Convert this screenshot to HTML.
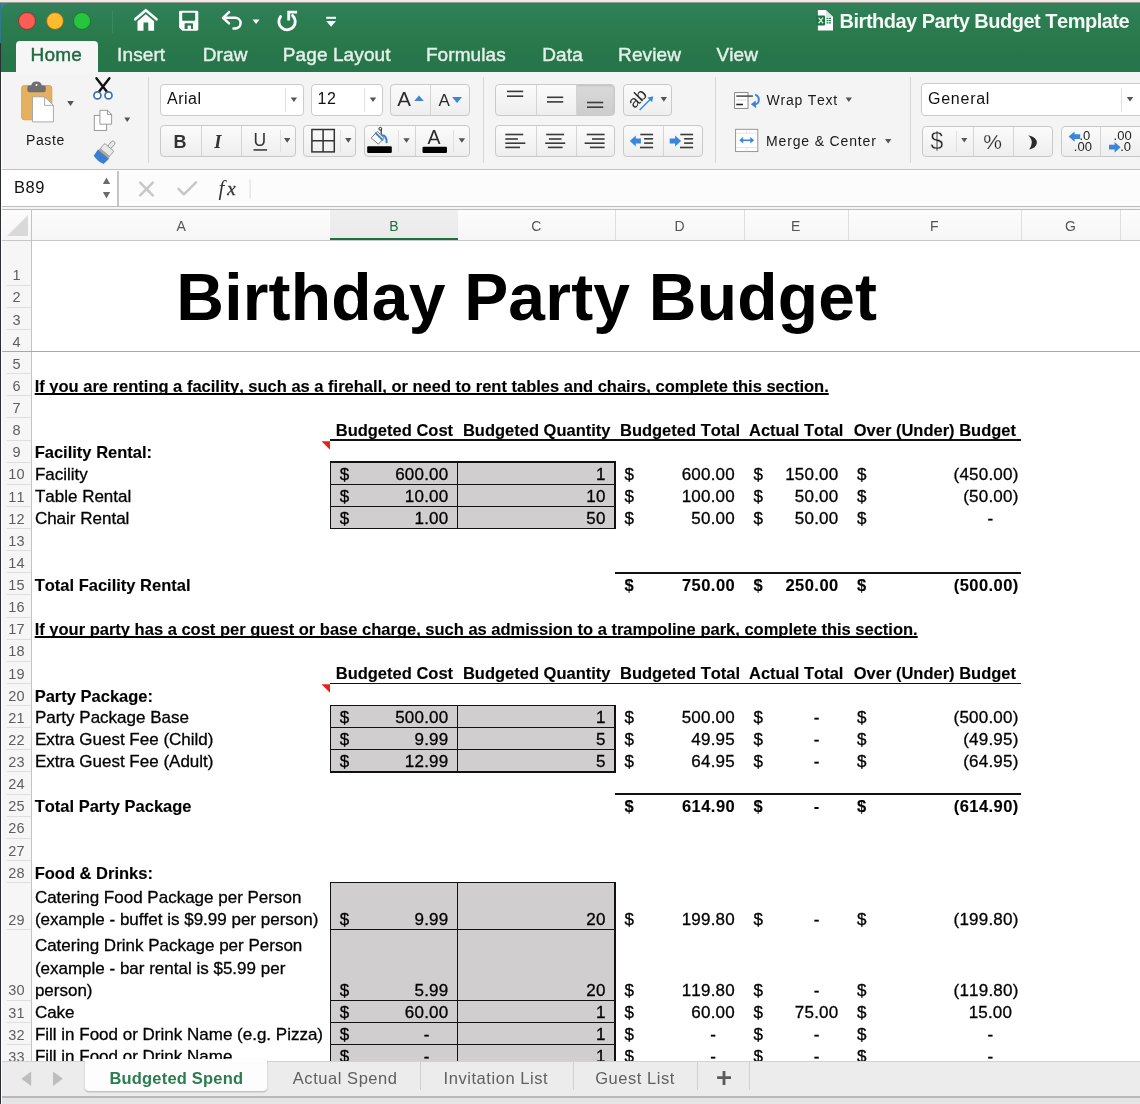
<!DOCTYPE html><html><head><meta charset="utf-8"><style>
*{margin:0;padding:0;box-sizing:border-box}
html,body{width:1140px;height:1104px;overflow:hidden;background:#fff;font-family:"Liberation Sans",sans-serif}
#root{position:absolute;left:0;top:0;width:1140px;height:1104px;will-change:transform}
.abs{position:absolute}
.t{position:absolute;white-space:pre;line-height:1;font-kerning:none}
.c{position:absolute;white-space:pre;line-height:1;font-kerning:none;font-size:16px;color:#000;letter-spacing:0.4px}
.b{font-weight:bold;letter-spacing:0.25px}
.n{letter-spacing:0.8px}
.s{-webkit-text-stroke:0.3px #000}
.sb{-webkit-text-stroke:0.12px #000}
.btn{position:absolute;border:1px solid #c9c9c9;border-radius:4px;background:linear-gradient(#fbfbfb,#eeeeee)}
.dv{position:absolute;width:1px;background:#d4d4d4}
</style></head><body><div id="root">
<div class="abs" style="left:0;top:0;width:1140px;height:3px;background:#eeebe6"></div>
<div class="abs" style="left:0;top:2px;width:1140px;height:1px;background:#9d9a94"></div>
<div class="abs" style="left:0;top:3px;width:1px;height:1101px;background:#2b2f33"></div>
<div class="abs" style="left:0;top:3px;width:12px;height:12px;background:#3a8093"></div>
<div class="abs" style="left:0;top:3px;width:1px;height:40px;background:#2f7a8c"></div>
<div class="abs" style="left:1px;top:3px;width:1139px;height:69px;background:linear-gradient(#30805a,#2a7a4d 45%,#26744a);border-top-left-radius:9px"></div>
<div class="abs" style="left:17.8px;top:11.6px;width:18px;height:18px;border-radius:50%;background:#fd5d55;border:1px solid #8a3a30"></div>
<div class="abs" style="left:45.5px;top:11.6px;width:18px;height:18px;border-radius:50%;background:#fdbb2d;border:1px solid #8a6a20"></div>
<div class="abs" style="left:73.2px;top:11.6px;width:18px;height:18px;border-radius:50%;background:#27c43f;border:1px solid #1f7a2c"></div>
<div class="abs" style="left:112px;top:10px;width:1px;height:23px;background:#3b8a5e"></div>
<div class="abs" style="left:2px;top:72px;width:1138px;height:98px;background:#f4f4f4"></div>
<div class="abs" style="left:2px;top:168.8px;width:1138px;height:1.3px;background:#c2c2c2"></div>
<div class="abs" style="left:16px;top:40.5px;width:81.5px;height:32px;background:#f6f6f6;border-radius:4px 4px 0 0"></div>
<div class="t" style="left:30.50px;top:45.12px;font-size:19.00px;font-weight:normal;color:#1f6b41;letter-spacing:0.25px;-webkit-text-stroke:0.45px #1f6b41;">Home</div>
<div class="t" style="left:117.10px;top:45.12px;font-size:19.00px;font-weight:normal;color:#e4efe8;letter-spacing:0.10px;-webkit-text-stroke:0.45px #e4efe8;">Insert</div>
<div class="t" style="left:202.80px;top:45.12px;font-size:19.00px;font-weight:normal;color:#e4efe8;letter-spacing:0.10px;-webkit-text-stroke:0.45px #e4efe8;">Draw</div>
<div class="t" style="left:282.80px;top:45.12px;font-size:19.00px;font-weight:normal;color:#e4efe8;letter-spacing:0.10px;-webkit-text-stroke:0.45px #e4efe8;">Page Layout</div>
<div class="t" style="left:425.90px;top:45.12px;font-size:19.00px;font-weight:normal;color:#e4efe8;letter-spacing:0.10px;-webkit-text-stroke:0.45px #e4efe8;">Formulas</div>
<div class="t" style="left:542.30px;top:45.12px;font-size:19.00px;font-weight:normal;color:#e4efe8;letter-spacing:0.10px;-webkit-text-stroke:0.45px #e4efe8;">Data</div>
<div class="t" style="left:618.10px;top:45.12px;font-size:19.00px;font-weight:normal;color:#e4efe8;letter-spacing:0.10px;-webkit-text-stroke:0.45px #e4efe8;">Review</div>
<div class="t" style="left:716.40px;top:45.12px;font-size:19.00px;font-weight:normal;color:#e4efe8;letter-spacing:0.10px;-webkit-text-stroke:0.45px #e4efe8;">View</div>
<div class="t" style="left:839.60px;top:10.77px;font-size:20.00px;font-weight:bold;color:#f4f8f5;letter-spacing:-0.50px;">Birthday Party Budget Template</div>
<svg class="abs" style="left:0;top:0" width="1140" height="72" viewBox="0 0 1140 72"><path d="M135.2,19.3 L145.8,10.2 L156.5,19.3" fill="none" stroke="#fff" stroke-width="2.6" stroke-linecap="round" stroke-linejoin="round"/><path d="M137.5,21.3 L145.8,14.3 L154.1,21.3 V30.7 H148.3 V22.4 H143.5 V30.7 H137.5 Z" fill="#fff"/><path d="M180.5,10.7 H196.9 Q198.3,10.7 198.3,12.1 V29.3 Q198.3,30.7 196.9,30.7 H182.4 L179.1,27.4 V12.1 Q179.1,10.7 180.5,10.7 Z" fill="#fff"/><rect x="182.2" y="12.8" width="13" height="8" rx="0.8" fill="#2a7a4d"/><rect x="184.6" y="23.3" width="8.4" height="5.8" rx="0.6" fill="#2a7a4d"/><rect x="187.6" y="25.6" width="3.4" height="3.5" fill="#fff"/><path d="M229.0,12.2 L223.0,17.8 L229.0,23.4 M223.2,17.8 H235.3 A5.3,5.3 0 0 1 235.3,28.4 H233.5" fill="none" stroke="#fff" stroke-width="2.5" stroke-linecap="round" stroke-linejoin="round"/><path d="M252.6,19.4 H259.5 L256.05,24 Z" fill="#fff"/><path d="M280.6,16.6 A8.2,8.2 0 1 0 292.6,15.6" fill="none" stroke="#fff" stroke-width="2.9" stroke-linecap="round"/><path d="M288.7,20.6 V12.1 H297.1" fill="none" stroke="#fff" stroke-width="2.8" stroke-linecap="butt" stroke-linejoin="miter"/><rect x="326.2" y="16.8" width="9.8" height="2" fill="#fff"/><path d="M326.2,21.1 H336 L331.1,26.8 Z" fill="#fff"/><path d="M817.9,10 H825.8 L833,17 V30.4 H817.9 Z" fill="#fff"/><path d="M825.8,10 V17 H833" fill="#d9e7de" /><rect x="816.6" y="15.4" width="8.4" height="10" rx="0.8" fill="#1c7443"/><path d="M818.6,17.6 L823,23.2 M823,17.6 L818.6,23.2" stroke="#cfe9d6" stroke-width="1.4"/><path d="M826.5,18.3 H831 M826.5,20.6 H831 M826.5,22.9 H831" stroke="#1c7443" stroke-width="1.3" stroke-dasharray="2 0.6"/></svg>
<div class="abs" style="left:147.8px;top:77px;width:1px;height:86px;background:#d6d6d6"></div>
<div class="abs" style="left:482.5px;top:77px;width:1px;height:86px;background:#d6d6d6"></div>
<div class="abs" style="left:714.6px;top:77px;width:1px;height:86px;background:#d6d6d6"></div>
<div class="abs" style="left:910.0px;top:77px;width:1px;height:86px;background:#d6d6d6"></div>
<div class="t" style="left:26.00px;top:132.95px;font-size:14.00px;font-weight:normal;color:#1a1a1a;letter-spacing:0.60px;">Paste</div>
<div class="abs" style="left:160px;top:83.6px;width:144.3px;height:32.4px;background:#fff;border:1px solid #cbcbcb;border-radius:4px"></div>
<div class="dv" style="left:284.6px;top:88px;height:24px;background:#e2e2e2"></div>
<div class="abs" style="left:310.7px;top:83.6px;width:72.3px;height:32.4px;background:#fff;border:1px solid #cbcbcb;border-radius:4px"></div>
<div class="dv" style="left:363.6px;top:88px;height:24px;background:#e2e2e2"></div>
<div class="t" style="left:167.00px;top:90.96px;font-size:16.00px;font-weight:normal;color:#111;letter-spacing:0.50px;">Arial</div>
<div class="t" style="left:317.50px;top:90.96px;font-size:16.00px;font-weight:normal;color:#111;letter-spacing:0.50px;">12</div>
<div class="btn" style="left:390.1px;top:83.6px;width:80.1px;height:32.0px"></div>
<div class="dv" style="left:430.0px;top:84.6px;height:30.0px"></div>
<div class="btn" style="left:160.0px;top:125.4px;width:135.6px;height:31.2px"></div>
<div class="dv" style="left:200.7px;top:126.4px;height:29.2px"></div>
<div class="dv" style="left:240.6px;top:126.4px;height:29.2px"></div>
<div class="dv" style="left:279.7px;top:130.4px;height:21.2px;background:#e0e0e0"></div>
<div class="btn" style="left:303.0px;top:125.4px;width:53.4px;height:31.2px"></div>
<div class="dv" style="left:339.6px;top:130.4px;height:21.2px;background:#e0e0e0"></div>
<div class="btn" style="left:363.5px;top:125.4px;width:106.5px;height:31.2px"></div>
<div class="dv" style="left:414.6px;top:126.4px;height:29.2px"></div>
<div class="dv" style="left:398.0px;top:130.4px;height:21.2px;background:#e0e0e0"></div>
<div class="dv" style="left:453.3px;top:130.4px;height:21.2px;background:#e0e0e0"></div>
<div class="btn" style="left:495.2px;top:83.6px;width:120.2px;height:32.0px"></div>
<div class="dv" style="left:535.8px;top:84.6px;height:30.0px"></div>
<div class="abs" style="left:575.8px;top:84.6px;width:38.6px;height:30px;background:linear-gradient(#d9d9d9,#cdcdcd);border-radius:0 3px 3px 0;box-shadow:inset 0 1px 2px rgba(0,0,0,.12)"></div>
<div class="dv" style="left:575.8px;top:84.6px;height:30px"></div>
<div class="btn" style="left:622.5px;top:83.6px;width:49.1px;height:32.0px"></div>
<div class="btn" style="left:495.2px;top:125.3px;width:120.2px;height:31.3px"></div>
<div class="dv" style="left:535.8px;top:126.3px;height:29.3px"></div>
<div class="dv" style="left:575.8px;top:126.3px;height:29.3px"></div>
<div class="btn" style="left:622.5px;top:125.3px;width:80.0px;height:31.3px"></div>
<div class="dv" style="left:662.5px;top:126.3px;height:29.3px"></div>
<div class="t" style="left:766.60px;top:93.35px;font-size:14.00px;font-weight:normal;color:#1a1a1a;letter-spacing:0.75px;">Wrap Text</div>
<div class="t" style="left:766.00px;top:134.45px;font-size:14.00px;font-weight:normal;color:#1a1a1a;letter-spacing:0.85px;">Merge &amp; Center</div>
<div class="abs" style="left:921.3px;top:83.3px;width:230px;height:32.4px;background:#fff;border:1px solid #cbcbcb;border-radius:4px"></div>
<div class="dv" style="left:1120.6px;top:88px;height:24px;background:#e2e2e2"></div>
<div class="t" style="left:928.00px;top:90.76px;font-size:16.00px;font-weight:normal;color:#111;letter-spacing:0.75px;">General</div>
<div class="btn" style="left:921.5px;top:125.5px;width:131.1px;height:31.0px"></div>
<div class="dv" style="left:972.8px;top:126.5px;height:29.0px"></div>
<div class="dv" style="left:1012.7px;top:126.5px;height:29.0px"></div>
<div class="dv" style="left:956.4px;top:130.5px;height:21.0px;background:#e0e0e0"></div>
<div class="btn" style="left:1060.5px;top:125.5px;width:89.5px;height:31.0px"></div>
<div class="dv" style="left:1100.1px;top:126.5px;height:29.0px"></div>
<svg class="abs" style="left:0;top:0" width="1140" height="172" viewBox="0 0 1140 172"><rect x="21.6" y="85.5" width="30.2" height="34.3" rx="2.8" fill="#e6b061" stroke="#cf9a4a" stroke-width="0.8"/><path d="M31.2,86.5 Q31.2,81.6 36.5,81.6 Q41.8,81.6 41.8,86.5 Z" fill="#6f6f6f"/><rect x="27.3" y="85.6" width="18.5" height="6.6" rx="2.2" fill="#6f6f6f"/><circle cx="36.5" cy="85" r="1" fill="#fff"/><path d="M32.5,96.8 H44.6 L53.4,105.4 V121.9 H32.5 Z" fill="#fff" stroke="#a2a2a2" stroke-width="0.9"/><path d="M44.6,96.8 V105.4 H53.4" fill="none" stroke="#a2a2a2" stroke-width="0.9"/><path d="M67.2,100.9 H73.8 L70.5,105.9 Z" fill="#555555"/><path d="M96.4,78.3 L107.3,92.2 M109.4,78.3 L98.6,92.2" stroke="#111" stroke-width="2.4" stroke-linecap="round"/><circle cx="97.4" cy="95.4" r="3.5" fill="#fff" stroke="#3d70b6" stroke-width="1.7"/><circle cx="108.5" cy="95.4" r="3.5" fill="#fff" stroke="#3d70b6" stroke-width="1.7"/><rect x="94.3" y="115.4" width="12.3" height="15" fill="#fff" stroke="#8e8e8e" stroke-width="0.9"/><path d="M99.9,110.3 H107.5 L111.6,114.4 V124.2 H99.9 Z" fill="#fff" stroke="#8e8e8e" stroke-width="0.9"/><path d="M107.5,110.3 V114.4 H111.6" fill="none" stroke="#8e8e8e" stroke-width="0.9"/><path d="M124.2,117.5 H130.2 L127.2,122.1 Z" fill="#555555"/><g transform="translate(104,152) rotate(40)"><rect x="-1" y="-14.5" width="4.2" height="8" rx="2" fill="#e8e8e8" stroke="#8c8c8c" stroke-width="0.8"/><rect x="-5" y="-7" width="12" height="7" rx="1" fill="#e9e9e9" stroke="#8c8c8c" stroke-width="0.8"/><rect x="-5.6" y="-0.5" width="13.2" height="2.6" fill="#b7a58f"/><path d="M-6.2,2 H8.2 L7.4,9.5 Q1,11.5 -5.4,9.5 Z" fill="#3c7fd0"/></g><path d="M290.7,97.5 H297.1 L293.9,102.1 Z" fill="#555555"/><path d="M369.8,97.5 H376.2 L373.0,102.1 Z" fill="#555555"/><text x="397.2" y="106" font-family="Liberation Sans" font-size="20.5" fill="#2b2b2b">A</text><path d="M414.2,100.9 H423.8 L419,95.4 Z" fill="#3b86d8"/><text x="438.5" y="105.7" font-family="Liberation Sans" font-size="17" fill="#2b2b2b">A</text><path d="M452.1,97 H462 L457.05,102.9 Z" fill="#3b86d8"/><text x="173.6" y="147.8" font-family="Liberation Sans" font-weight="bold" font-size="18" fill="#333">B</text><text x="214.2" y="147.8" font-family="Liberation Serif" font-style="italic" font-weight="bold" font-size="18.5" fill="#333">I</text><text x="253.5" y="146.3" font-family="Liberation Sans" font-size="17.5" fill="#333">U</text><rect x="253.5" y="149.2" width="13.6" height="1.5" fill="#333"/><path d="M284.0,138.1 H290.4 L287.2,142.7 Z" fill="#555555"/><rect x="311.9" y="129.5" width="22.4" height="22.4" fill="none" stroke="#333" stroke-width="1.5"/><path d="M323.1,129.5 V151.9 M311.9,140.7 H334.3" stroke="#333" stroke-width="1.5"/><path d="M345.1,138.1 H351.5 L348.3,142.7 Z" fill="#555555"/><path d="M371.2,138 L377.4,131.4 L384,138.2 L378.3,144.1 Z" fill="#fff" stroke="#6a6a6a" stroke-width="0.9" stroke-linejoin="round"/><path d="M375.2,132.6 L383,140.4" stroke="#3b7fcf" stroke-width="2"/><path d="M381.2,134.6 V129.2" stroke="#222" stroke-width="1.1"/><circle cx="380.3" cy="128.8" r="1.4" fill="none" stroke="#222" stroke-width="1"/><path d="M382,135.2 Q386.8,135.4 386.6,142.2" fill="none" stroke="#3b7fcf" stroke-width="2" stroke-linecap="round"/><rect x="367.2" y="146.3" width="24.6" height="6.7" rx="1.2" fill="#000"/><path d="M403.3,138.2 H409.7 L406.5,142.8 Z" fill="#555555"/><text x="427.5" y="143.5" font-family="Liberation Sans" font-size="19.5" fill="#2b2b2b">A</text><rect x="422.5" y="146.7" width="24.5" height="6.3" rx="1.2" fill="#000"/><path d="M458.7,138.2 H465.1 L461.9,142.8 Z" fill="#555555"/><rect x="507.0" y="90.6" width="16.2" height="1.6" fill="#3a3a3a"/><rect x="507.0" y="95.4" width="16.2" height="1.6" fill="#3a3a3a"/><rect x="547.0" y="96.5" width="16.2" height="1.6" fill="#3a3a3a"/><rect x="547.0" y="101.1" width="16.2" height="1.6" fill="#3a3a3a"/><rect x="587.0" y="101.7" width="16.2" height="1.6" fill="#3a3a3a"/><rect x="587.0" y="106.4" width="16.2" height="1.6" fill="#3a3a3a"/><text x="0" y="0" font-family="Liberation Sans" font-size="17" fill="#2b2b2b" transform="translate(634.5,109) rotate(-45)">ab</text><path d="M639.7,110 L652.6,97.1" stroke="#3b86d8" stroke-width="1.4"/><path d="M653.2,96.5 L647.4,97.6 L652.1,102.3 Z" fill="#3b86d8"/><path d="M660.6,97.1 H667.0 L663.8,101.7 Z" fill="#555555"/><rect x="505.3" y="133.7" width="17.9" height="1.6" fill="#3a3a3a"/><rect x="546.2" y="133.7" width="17.9" height="1.6" fill="#3a3a3a"/><rect x="586.7" y="133.7" width="17.9" height="1.6" fill="#3a3a3a"/><rect x="505.3" y="138.2" width="12.6" height="1.6" fill="#3a3a3a"/><rect x="548.9" y="138.2" width="12.6" height="1.6" fill="#3a3a3a"/><rect x="592.0" y="138.2" width="12.6" height="1.6" fill="#3a3a3a"/><rect x="505.3" y="142.4" width="20.0" height="1.6" fill="#3a3a3a"/><rect x="545.2" y="142.4" width="20.0" height="1.6" fill="#3a3a3a"/><rect x="584.6" y="142.4" width="20.0" height="1.6" fill="#3a3a3a"/><rect x="505.3" y="146.6" width="14.7" height="1.6" fill="#3a3a3a"/><rect x="547.9" y="146.6" width="14.7" height="1.6" fill="#3a3a3a"/><rect x="589.9" y="146.6" width="14.7" height="1.6" fill="#3a3a3a"/><rect x="640.3" y="133.7" width="12.8" height="1.6" fill="#3a3a3a"/><rect x="644.1" y="138" width="9" height="1.6" fill="#3a3a3a"/><rect x="644.1" y="142.3" width="9" height="1.6" fill="#3a3a3a"/><rect x="640" y="146.7" width="13.1" height="1.6" fill="#3a3a3a"/><path d="M629.8,140.9 L635.8,135.4 V138.4 H640.9 V143.4 H635.8 V146.4 Z" fill="#3b86d8"/><rect x="680.3" y="133.7" width="12.8" height="1.6" fill="#3a3a3a"/><rect x="684.1" y="138" width="9" height="1.6" fill="#3a3a3a"/><rect x="684.1" y="142.3" width="9" height="1.6" fill="#3a3a3a"/><rect x="680" y="146.7" width="13.1" height="1.6" fill="#3a3a3a"/><path d="M681.1,140.9 L675.1,135.4 V138.4 H669.7 V143.4 H675.1 V146.4 Z" fill="#3b86d8"/><rect x="734.6" y="92.6" width="13.4" height="15.8" fill="#fff" stroke="#7a7a7a" stroke-width="0.9"/><rect x="736.3" y="95.3" width="16.6" height="1.6" fill="#555"/><rect x="736.3" y="99.6" width="10" height="0.8" fill="#ccc"/><rect x="736.3" y="103.7" width="6.7" height="1.6" fill="#222"/><path d="M755.2,94.6 Q759.8,96.5 758.6,101.5 Q757.6,104.2 754.5,104.6" fill="none" stroke="#3b86d8" stroke-width="2"/><path d="M750.8,104.3 L755.7,100.6 L756.2,108.2 Z" fill="#3b86d8"/><path d="M845.6,97.4 H852.0 L848.8,102.0 Z" fill="#555555"/><rect x="735.6" y="129.3" width="22.2" height="22.3" fill="#fff" stroke="#8a8a8a" stroke-width="0.9"/><path d="M746.7,129.6 V134 M746.7,147 V151.4 M736,133.2 H757.4 M736,147.5 H757.4" stroke="#dedede" stroke-width="0.8"/><path d="M741.5,140.3 H752" stroke="#3b86d8" stroke-width="1.6"/><path d="M739.3,140.3 L743.2,137 V143.6 Z M754.2,140.3 L750.3,137 V143.6 Z" fill="#3b86d8"/><path d="M885.0,138.9 H891.4 L888.2,143.5 Z" fill="#555555"/><path d="M1126.8,97.0 H1133.2 L1130.0,101.6 Z" fill="#555555"/><text x="930.6" y="149.2" font-family="Liberation Sans" font-size="23" fill="#222" stroke="#f3f3f3" stroke-width="0.35">$</text><path d="M961.3,138.0 H967.3 L964.3,142.4 Z" fill="#555555"/><text x="983.2" y="149.3" font-family="Liberation Sans" font-size="21" fill="#222" stroke="#f3f3f3" stroke-width="0.25">%</text><path d="M1028.2,135.2 Q1037.4,137.4 1036.8,143.2 Q1036.2,148 1029.2,149.4 Q1031.6,146.4 1031.8,142.6 Q1032,138.8 1028.2,135.2 Z" fill="#2a2a2a"/><text x="1079.5" y="140.3" font-family="Liberation Sans" font-size="13" fill="#222">.0</text><text x="1073.8" y="151" font-family="Liberation Sans" font-size="13" fill="#222">.00</text><path d="M1068.6,136.6 L1074.6,131.4 V134.2 H1080.2 V139 H1074.6 V141.8 Z" fill="#3b86d8"/><text x="1113.6" y="140.3" font-family="Liberation Sans" font-size="13" fill="#222">.00</text><text x="1120.2" y="151" font-family="Liberation Sans" font-size="13" fill="#222">.0</text><path d="M1120.6,147.2 L1114.6,142 V144.8 H1109 V149.6 H1114.6 V152.4 Z" fill="#3b86d8"/></svg>
<div class="abs" style="left:2px;top:171px;width:1138px;height:35px;background:#fcfcfc"></div>
<div class="abs" style="left:2px;top:171px;width:115.5px;height:35px;background:#fff"></div>
<div class="abs" style="left:117px;top:171px;width:1.5px;height:35px;background:#c4c4c4"></div>
<div class="abs" style="left:2px;top:206px;width:1138px;height:1.2px;background:#bdbdbd"></div>
<div class="abs" style="left:2px;top:207.2px;width:1138px;height:1.6px;background:#f4f4f4"></div>
<div class="abs" style="left:2px;top:208.7px;width:1138px;height:1.2px;background:#bdbdbd"></div>
<div class="t" style="left:14.00px;top:178.83px;font-size:16.50px;font-weight:normal;color:#111;letter-spacing:0.50px;">B89</div>
<svg class="abs" style="left:0;top:0" width="300" height="210" viewBox="0 0 300 210"><path d="M102.9,184 H110.1 L106.5,177.6 Z M102.9,192 H110.1 L106.5,198.4 Z" fill="#6a6a6a"/><path d="M140.2,182.6 L152.8,195.3 M152.8,182.6 L140.2,195.3" stroke="#c8c8c8" stroke-width="2.6" stroke-linecap="round"/><path d="M178.6,188.8 L183.9,194.4 L196,182.4" fill="none" stroke="#c8c8c8" stroke-width="2.6" stroke-linecap="round" stroke-linejoin="round"/><text x="218.6" y="195.2" font-family="Liberation Serif" font-style="italic" font-size="21" fill="#333">f</text><text x="227.2" y="195.2" font-family="Liberation Serif" font-style="italic" font-size="19" fill="#333" stroke="#333" stroke-width="0.3">x</text><rect x="249.6" y="179.5" width="1" height="19" fill="#dcdcdc"/></svg>
<div class="abs" style="left:2px;top:209.9px;width:1138px;height:30px;background:linear-gradient(#fcfcfc,#f6f6f6)"></div>
<div class="abs" style="left:330.1px;top:209.9px;width:128px;height:30px;background:linear-gradient(#efefef,#eaeaea)"></div>
<div class="abs" style="left:330.1px;top:237.5px;width:128px;height:2.7px;background:#1e6e42"></div>
<div class="abs" style="left:2px;top:239.8px;width:1138px;height:1.1px;background:#c6c6c6"></div>
<div class="abs" style="left:615.0px;top:210px;width:1px;height:29.5px;background:#dedede"></div>
<div class="abs" style="left:744.0px;top:210px;width:1px;height:29.5px;background:#dedede"></div>
<div class="abs" style="left:847.5px;top:210px;width:1px;height:29.5px;background:#dedede"></div>
<div class="abs" style="left:1021.3px;top:210px;width:1px;height:29.5px;background:#dedede"></div>
<div class="abs" style="left:1119.8px;top:210px;width:1px;height:29.5px;background:#dedede"></div>
<div class="abs" style="left:31.3px;top:209.2px;width:1.2px;height:895px;background:#c3c3c3"></div>
<svg class="abs" style="left:0;top:205" width="32" height="36"><path d="M28,10 V31 H7 Z" fill="#d9d9d9"/></svg>
<div class="t" style="left:181.15px;width:0;top:218.95px;font-size:14.00px;font-weight:normal;color:#555;letter-spacing:0.00px;display:flex;justify-content:center;"><span>A</span></div>
<div class="t" style="left:393.90px;width:0;top:218.95px;font-size:14.00px;font-weight:normal;color:#1e6e42;letter-spacing:0.00px;display:flex;justify-content:center;"><span>B</span></div>
<div class="t" style="left:536.25px;width:0;top:218.95px;font-size:14.00px;font-weight:normal;color:#555;letter-spacing:0.00px;display:flex;justify-content:center;"><span>C</span></div>
<div class="t" style="left:679.50px;width:0;top:218.95px;font-size:14.00px;font-weight:normal;color:#555;letter-spacing:0.00px;display:flex;justify-content:center;"><span>D</span></div>
<div class="t" style="left:795.75px;width:0;top:218.95px;font-size:14.00px;font-weight:normal;color:#555;letter-spacing:0.00px;display:flex;justify-content:center;"><span>E</span></div>
<div class="t" style="left:934.40px;width:0;top:218.95px;font-size:14.00px;font-weight:normal;color:#555;letter-spacing:0.00px;display:flex;justify-content:center;"><span>F</span></div>
<div class="t" style="left:1070.55px;width:0;top:218.95px;font-size:14.00px;font-weight:normal;color:#555;letter-spacing:0.00px;display:flex;justify-content:center;"><span>G</span></div>
<div class="abs" style="left:2px;top:240.5px;width:29.3px;height:820px;background:#f6f6f6"></div>
<div class="abs" style="left:7px;top:284.80px;width:24.3px;height:1px;background:#dfdfdf"></div>
<div class="t" style="left:16.50px;width:0;top:268.43px;font-size:14.50px;font-weight:normal;color:#5e5e5e;letter-spacing:0.20px;display:flex;justify-content:center;"><span>1</span></div>
<div class="abs" style="left:7px;top:306.80px;width:24.3px;height:1px;background:#dfdfdf"></div>
<div class="t" style="left:16.50px;width:0;top:290.43px;font-size:14.50px;font-weight:normal;color:#5e5e5e;letter-spacing:0.20px;display:flex;justify-content:center;"><span>2</span></div>
<div class="abs" style="left:7px;top:329.00px;width:24.3px;height:1px;background:#dfdfdf"></div>
<div class="t" style="left:16.50px;width:0;top:312.63px;font-size:14.50px;font-weight:normal;color:#5e5e5e;letter-spacing:0.20px;display:flex;justify-content:center;"><span>3</span></div>
<div class="abs" style="left:7px;top:351.00px;width:24.3px;height:1px;background:#dfdfdf"></div>
<div class="t" style="left:16.50px;width:0;top:334.63px;font-size:14.50px;font-weight:normal;color:#5e5e5e;letter-spacing:0.20px;display:flex;justify-content:center;"><span>4</span></div>
<div class="abs" style="left:7px;top:373.12px;width:24.3px;height:1px;background:#dfdfdf"></div>
<div class="t" style="left:16.50px;width:0;top:356.75px;font-size:14.50px;font-weight:normal;color:#5e5e5e;letter-spacing:0.20px;display:flex;justify-content:center;"><span>5</span></div>
<div class="abs" style="left:7px;top:395.25px;width:24.3px;height:1px;background:#dfdfdf"></div>
<div class="t" style="left:16.50px;width:0;top:378.88px;font-size:14.50px;font-weight:normal;color:#5e5e5e;letter-spacing:0.20px;display:flex;justify-content:center;"><span>6</span></div>
<div class="abs" style="left:7px;top:417.38px;width:24.3px;height:1px;background:#dfdfdf"></div>
<div class="t" style="left:16.50px;width:0;top:401.00px;font-size:14.50px;font-weight:normal;color:#5e5e5e;letter-spacing:0.20px;display:flex;justify-content:center;"><span>7</span></div>
<div class="abs" style="left:7px;top:439.50px;width:24.3px;height:1px;background:#dfdfdf"></div>
<div class="t" style="left:16.50px;width:0;top:423.13px;font-size:14.50px;font-weight:normal;color:#5e5e5e;letter-spacing:0.20px;display:flex;justify-content:center;"><span>8</span></div>
<div class="abs" style="left:7px;top:461.62px;width:24.3px;height:1px;background:#dfdfdf"></div>
<div class="t" style="left:16.50px;width:0;top:445.25px;font-size:14.50px;font-weight:normal;color:#5e5e5e;letter-spacing:0.20px;display:flex;justify-content:center;"><span>9</span></div>
<div class="abs" style="left:7px;top:483.75px;width:24.3px;height:1px;background:#dfdfdf"></div>
<div class="t" style="left:16.50px;width:0;top:467.38px;font-size:14.50px;font-weight:normal;color:#5e5e5e;letter-spacing:0.20px;display:flex;justify-content:center;"><span>10</span></div>
<div class="abs" style="left:7px;top:505.88px;width:24.3px;height:1px;background:#dfdfdf"></div>
<div class="t" style="left:16.50px;width:0;top:489.50px;font-size:14.50px;font-weight:normal;color:#5e5e5e;letter-spacing:0.20px;display:flex;justify-content:center;"><span>11</span></div>
<div class="abs" style="left:7px;top:528.00px;width:24.3px;height:1px;background:#dfdfdf"></div>
<div class="t" style="left:16.50px;width:0;top:511.63px;font-size:14.50px;font-weight:normal;color:#5e5e5e;letter-spacing:0.20px;display:flex;justify-content:center;"><span>12</span></div>
<div class="abs" style="left:7px;top:550.12px;width:24.3px;height:1px;background:#dfdfdf"></div>
<div class="t" style="left:16.50px;width:0;top:533.75px;font-size:14.50px;font-weight:normal;color:#5e5e5e;letter-spacing:0.20px;display:flex;justify-content:center;"><span>13</span></div>
<div class="abs" style="left:7px;top:572.25px;width:24.3px;height:1px;background:#dfdfdf"></div>
<div class="t" style="left:16.50px;width:0;top:555.88px;font-size:14.50px;font-weight:normal;color:#5e5e5e;letter-spacing:0.20px;display:flex;justify-content:center;"><span>14</span></div>
<div class="abs" style="left:7px;top:594.38px;width:24.3px;height:1px;background:#dfdfdf"></div>
<div class="t" style="left:16.50px;width:0;top:578.00px;font-size:14.50px;font-weight:normal;color:#5e5e5e;letter-spacing:0.20px;display:flex;justify-content:center;"><span>15</span></div>
<div class="abs" style="left:7px;top:616.50px;width:24.3px;height:1px;background:#dfdfdf"></div>
<div class="t" style="left:16.50px;width:0;top:600.13px;font-size:14.50px;font-weight:normal;color:#5e5e5e;letter-spacing:0.20px;display:flex;justify-content:center;"><span>16</span></div>
<div class="abs" style="left:7px;top:638.62px;width:24.3px;height:1px;background:#dfdfdf"></div>
<div class="t" style="left:16.50px;width:0;top:622.25px;font-size:14.50px;font-weight:normal;color:#5e5e5e;letter-spacing:0.20px;display:flex;justify-content:center;"><span>17</span></div>
<div class="abs" style="left:7px;top:660.75px;width:24.3px;height:1px;background:#dfdfdf"></div>
<div class="t" style="left:16.50px;width:0;top:644.38px;font-size:14.50px;font-weight:normal;color:#5e5e5e;letter-spacing:0.20px;display:flex;justify-content:center;"><span>18</span></div>
<div class="abs" style="left:7px;top:682.88px;width:24.3px;height:1px;background:#dfdfdf"></div>
<div class="t" style="left:16.50px;width:0;top:666.50px;font-size:14.50px;font-weight:normal;color:#5e5e5e;letter-spacing:0.20px;display:flex;justify-content:center;"><span>19</span></div>
<div class="abs" style="left:7px;top:705.00px;width:24.3px;height:1px;background:#dfdfdf"></div>
<div class="t" style="left:16.50px;width:0;top:688.63px;font-size:14.50px;font-weight:normal;color:#5e5e5e;letter-spacing:0.20px;display:flex;justify-content:center;"><span>20</span></div>
<div class="abs" style="left:7px;top:727.12px;width:24.3px;height:1px;background:#dfdfdf"></div>
<div class="t" style="left:16.50px;width:0;top:710.75px;font-size:14.50px;font-weight:normal;color:#5e5e5e;letter-spacing:0.20px;display:flex;justify-content:center;"><span>21</span></div>
<div class="abs" style="left:7px;top:749.25px;width:24.3px;height:1px;background:#dfdfdf"></div>
<div class="t" style="left:16.50px;width:0;top:732.88px;font-size:14.50px;font-weight:normal;color:#5e5e5e;letter-spacing:0.20px;display:flex;justify-content:center;"><span>22</span></div>
<div class="abs" style="left:7px;top:771.38px;width:24.3px;height:1px;background:#dfdfdf"></div>
<div class="t" style="left:16.50px;width:0;top:755.00px;font-size:14.50px;font-weight:normal;color:#5e5e5e;letter-spacing:0.20px;display:flex;justify-content:center;"><span>23</span></div>
<div class="abs" style="left:7px;top:793.50px;width:24.3px;height:1px;background:#dfdfdf"></div>
<div class="t" style="left:16.50px;width:0;top:777.13px;font-size:14.50px;font-weight:normal;color:#5e5e5e;letter-spacing:0.20px;display:flex;justify-content:center;"><span>24</span></div>
<div class="abs" style="left:7px;top:815.62px;width:24.3px;height:1px;background:#dfdfdf"></div>
<div class="t" style="left:16.50px;width:0;top:799.25px;font-size:14.50px;font-weight:normal;color:#5e5e5e;letter-spacing:0.20px;display:flex;justify-content:center;"><span>25</span></div>
<div class="abs" style="left:7px;top:837.75px;width:24.3px;height:1px;background:#dfdfdf"></div>
<div class="t" style="left:16.50px;width:0;top:821.38px;font-size:14.50px;font-weight:normal;color:#5e5e5e;letter-spacing:0.20px;display:flex;justify-content:center;"><span>26</span></div>
<div class="abs" style="left:7px;top:859.88px;width:24.3px;height:1px;background:#dfdfdf"></div>
<div class="t" style="left:16.50px;width:0;top:843.50px;font-size:14.50px;font-weight:normal;color:#5e5e5e;letter-spacing:0.20px;display:flex;justify-content:center;"><span>27</span></div>
<div class="abs" style="left:7px;top:882.00px;width:24.3px;height:1px;background:#dfdfdf"></div>
<div class="t" style="left:16.50px;width:0;top:865.63px;font-size:14.50px;font-weight:normal;color:#5e5e5e;letter-spacing:0.20px;display:flex;justify-content:center;"><span>28</span></div>
<div class="abs" style="left:7px;top:929.00px;width:24.3px;height:1px;background:#dfdfdf"></div>
<div class="t" style="left:16.50px;width:0;top:912.63px;font-size:14.50px;font-weight:normal;color:#5e5e5e;letter-spacing:0.20px;display:flex;justify-content:center;"><span>29</span></div>
<div class="abs" style="left:7px;top:999.80px;width:24.3px;height:1px;background:#dfdfdf"></div>
<div class="t" style="left:16.50px;width:0;top:983.43px;font-size:14.50px;font-weight:normal;color:#5e5e5e;letter-spacing:0.20px;display:flex;justify-content:center;"><span>30</span></div>
<div class="abs" style="left:7px;top:1021.90px;width:24.3px;height:1px;background:#dfdfdf"></div>
<div class="t" style="left:16.50px;width:0;top:1005.53px;font-size:14.50px;font-weight:normal;color:#5e5e5e;letter-spacing:0.20px;display:flex;justify-content:center;"><span>31</span></div>
<div class="abs" style="left:7px;top:1044.10px;width:24.3px;height:1px;background:#dfdfdf"></div>
<div class="t" style="left:16.50px;width:0;top:1027.73px;font-size:14.50px;font-weight:normal;color:#5e5e5e;letter-spacing:0.20px;display:flex;justify-content:center;"><span>32</span></div>
<div class="t" style="left:16.50px;width:0;top:1049.83px;font-size:14.50px;font-weight:normal;color:#5e5e5e;letter-spacing:0.20px;display:flex;justify-content:center;"><span>33</span></div>
<div class="abs" style="left:2px;top:350.8px;width:1138px;height:1.5px;background:#a8a8a8"></div>
<div class="abs" style="left:330.30px;top:462.12px;width:284.70px;height:66.38px;background:#d0cece"></div>
<div class="abs" style="left:329.60px;top:461.43px;width:1.4px;height:67.78px;background:#111"></div>
<div class="abs" style="left:456.80px;top:461.43px;width:1.4px;height:67.78px;background:#111"></div>
<div class="abs" style="left:614.30px;top:461.43px;width:1.4px;height:67.78px;background:#111"></div>
<div class="abs" style="left:329.60px;top:461.43px;width:286.10px;height:1.4px;background:#111"></div>
<div class="abs" style="left:329.60px;top:483.55px;width:286.10px;height:1.4px;background:#111"></div>
<div class="abs" style="left:329.60px;top:505.68px;width:286.10px;height:1.4px;background:#111"></div>
<div class="abs" style="left:329.60px;top:527.80px;width:286.10px;height:1.4px;background:#111"></div>
<div class="abs" style="left:330.30px;top:705.50px;width:284.70px;height:66.38px;background:#d0cece"></div>
<div class="abs" style="left:329.60px;top:704.80px;width:1.4px;height:67.78px;background:#111"></div>
<div class="abs" style="left:456.80px;top:704.80px;width:1.4px;height:67.78px;background:#111"></div>
<div class="abs" style="left:614.30px;top:704.80px;width:1.4px;height:67.78px;background:#111"></div>
<div class="abs" style="left:329.60px;top:704.80px;width:286.10px;height:1.4px;background:#111"></div>
<div class="abs" style="left:329.60px;top:726.92px;width:286.10px;height:1.4px;background:#111"></div>
<div class="abs" style="left:329.60px;top:749.05px;width:286.10px;height:1.4px;background:#111"></div>
<div class="abs" style="left:329.60px;top:771.17px;width:286.10px;height:1.4px;background:#111"></div>
<div class="abs" style="left:330.30px;top:882.50px;width:284.70px;height:178.00px;background:#d0cece"></div>
<div class="abs" style="left:329.60px;top:881.80px;width:1.4px;height:179.40px;background:#111"></div>
<div class="abs" style="left:456.80px;top:881.80px;width:1.4px;height:179.40px;background:#111"></div>
<div class="abs" style="left:614.30px;top:881.80px;width:1.4px;height:179.40px;background:#111"></div>
<div class="abs" style="left:329.60px;top:881.80px;width:286.10px;height:1.4px;background:#111"></div>
<div class="abs" style="left:329.60px;top:928.80px;width:286.10px;height:1.4px;background:#111"></div>
<div class="abs" style="left:329.60px;top:999.60px;width:286.10px;height:1.4px;background:#111"></div>
<div class="abs" style="left:329.60px;top:1021.70px;width:286.10px;height:1.4px;background:#111"></div>
<div class="abs" style="left:329.60px;top:1043.90px;width:286.10px;height:1.4px;background:#111"></div>
<div class="t" style="left:176.30px;top:264.33px;font-size:66.00px;font-weight:bold;color:#000;letter-spacing:0.20px;">Birthday Party Budget</div>
<div class="t sb" style="left:34.70px;top:377.78px;font-size:16.50px;font-weight:bold;color:#000;letter-spacing:0.00px;text-decoration:underline;text-decoration-thickness:1.5px;text-underline-offset:1.3px;text-decoration-skip-ink:none;">If you are renting a facility, such as a firehall, or need to rent tables and chairs, complete this section.</div>
<div class="t sb" style="left:34.70px;top:621.16px;font-size:16.50px;font-weight:bold;color:#000;letter-spacing:0.00px;text-decoration:underline;text-decoration-thickness:1.5px;text-underline-offset:1.3px;text-decoration-skip-ink:none;">If your party has a cost per guest or base charge, such as admission to a trampoline park, complete this section.</div>
<div class="t sb" style="left:394.40px;width:0;top:422.03px;font-size:16.50px;font-weight:bold;color:#000;letter-spacing:0.00px;display:flex;justify-content:center;"><span>Budgeted Cost</span></div>
<div class="t sb" style="left:536.75px;width:0;top:422.03px;font-size:16.50px;font-weight:bold;color:#000;letter-spacing:0.00px;display:flex;justify-content:center;"><span>Budgeted Quantity</span></div>
<div class="t sb" style="left:680.00px;width:0;top:422.03px;font-size:16.50px;font-weight:bold;color:#000;letter-spacing:0.00px;display:flex;justify-content:center;"><span>Budgeted Total</span></div>
<div class="t sb" style="left:796.25px;width:0;top:422.03px;font-size:16.50px;font-weight:bold;color:#000;letter-spacing:0.00px;display:flex;justify-content:center;"><span>Actual Total</span></div>
<div class="t sb" style="left:934.90px;width:0;top:422.03px;font-size:16.50px;font-weight:bold;color:#000;letter-spacing:0.00px;display:flex;justify-content:center;"><span>Over (Under) Budget</span></div>
<div class="abs" style="left:330.30px;top:439.25px;width:691.00px;height:1.50px;background:#111"></div>
<div class="t sb" style="left:394.40px;width:0;top:665.41px;font-size:16.50px;font-weight:bold;color:#000;letter-spacing:0.00px;display:flex;justify-content:center;"><span>Budgeted Cost</span></div>
<div class="t sb" style="left:536.75px;width:0;top:665.41px;font-size:16.50px;font-weight:bold;color:#000;letter-spacing:0.00px;display:flex;justify-content:center;"><span>Budgeted Quantity</span></div>
<div class="t sb" style="left:680.00px;width:0;top:665.41px;font-size:16.50px;font-weight:bold;color:#000;letter-spacing:0.00px;display:flex;justify-content:center;"><span>Budgeted Total</span></div>
<div class="t sb" style="left:796.25px;width:0;top:665.41px;font-size:16.50px;font-weight:bold;color:#000;letter-spacing:0.00px;display:flex;justify-content:center;"><span>Actual Total</span></div>
<div class="t sb" style="left:934.90px;width:0;top:665.41px;font-size:16.50px;font-weight:bold;color:#000;letter-spacing:0.00px;display:flex;justify-content:center;"><span>Over (Under) Budget</span></div>
<div class="abs" style="left:330.30px;top:682.62px;width:691.00px;height:1.50px;background:#111"></div>
<div class="t sb" style="left:34.70px;top:444.16px;font-size:16.50px;font-weight:bold;color:#000;letter-spacing:0.00px;">Facility Rental:</div>
<svg class="abs" style="left:320px;top:440.50px" width="12" height="12"><path d="M1.5,0.3 H10 V8.8 Z" fill="#e8201a"/></svg>
<div class="t sb" style="left:34.70px;top:687.53px;font-size:16.50px;font-weight:bold;color:#000;letter-spacing:0.00px;">Party Package:</div>
<svg class="abs" style="left:320px;top:683.88px" width="12" height="12"><path d="M1.5,0.3 H10 V8.8 Z" fill="#e8201a"/></svg>
<div class="t s" style="left:34.90px;top:465.86px;font-size:17.00px;font-weight:normal;color:#000;letter-spacing:0.00px;">Facility</div>
<div class="t s" style="left:339.80px;top:465.86px;font-size:17.00px;font-weight:normal;color:#000;letter-spacing:0.00px;">$</div>
<div class="t s" style="right:691.80px;top:465.86px;font-size:17.00px;font-weight:normal;color:#000;letter-spacing:0.20px;margin-right:-0.20px;">600.00</div>
<div class="t s" style="right:534.60px;top:465.86px;font-size:17.00px;font-weight:normal;color:#000;letter-spacing:0.20px;margin-right:-0.20px;">1</div>
<div class="t s" style="left:624.50px;top:465.86px;font-size:17.00px;font-weight:normal;color:#000;letter-spacing:0.00px;">$</div>
<div class="t s" style="right:405.30px;top:465.86px;font-size:17.00px;font-weight:normal;color:#000;letter-spacing:0.20px;margin-right:-0.20px;">600.00</div>
<div class="t s" style="left:753.50px;top:465.86px;font-size:17.00px;font-weight:normal;color:#000;letter-spacing:0.00px;">$</div>
<div class="t s" style="right:301.80px;top:465.86px;font-size:17.00px;font-weight:normal;color:#000;letter-spacing:0.20px;margin-right:-0.20px;">150.00</div>
<div class="t s" style="left:857.00px;top:465.86px;font-size:17.00px;font-weight:normal;color:#000;letter-spacing:0.00px;">$</div>
<div class="t s" style="right:121.70px;top:465.86px;font-size:17.00px;font-weight:normal;color:#000;letter-spacing:0.20px;margin-right:-0.20px;">(450.00)</div>
<div class="t s" style="left:34.90px;top:487.98px;font-size:17.00px;font-weight:normal;color:#000;letter-spacing:0.00px;">Table Rental</div>
<div class="t s" style="left:339.80px;top:487.98px;font-size:17.00px;font-weight:normal;color:#000;letter-spacing:0.00px;">$</div>
<div class="t s" style="right:691.80px;top:487.98px;font-size:17.00px;font-weight:normal;color:#000;letter-spacing:0.20px;margin-right:-0.20px;">10.00</div>
<div class="t s" style="right:534.60px;top:487.98px;font-size:17.00px;font-weight:normal;color:#000;letter-spacing:0.20px;margin-right:-0.20px;">10</div>
<div class="t s" style="left:624.50px;top:487.98px;font-size:17.00px;font-weight:normal;color:#000;letter-spacing:0.00px;">$</div>
<div class="t s" style="right:405.30px;top:487.98px;font-size:17.00px;font-weight:normal;color:#000;letter-spacing:0.20px;margin-right:-0.20px;">100.00</div>
<div class="t s" style="left:753.50px;top:487.98px;font-size:17.00px;font-weight:normal;color:#000;letter-spacing:0.00px;">$</div>
<div class="t s" style="right:301.80px;top:487.98px;font-size:17.00px;font-weight:normal;color:#000;letter-spacing:0.20px;margin-right:-0.20px;">50.00</div>
<div class="t s" style="left:857.00px;top:487.98px;font-size:17.00px;font-weight:normal;color:#000;letter-spacing:0.00px;">$</div>
<div class="t s" style="right:121.70px;top:487.98px;font-size:17.00px;font-weight:normal;color:#000;letter-spacing:0.20px;margin-right:-0.20px;">(50.00)</div>
<div class="t s" style="left:34.90px;top:510.11px;font-size:17.00px;font-weight:normal;color:#000;letter-spacing:0.00px;">Chair Rental</div>
<div class="t s" style="left:339.80px;top:510.11px;font-size:17.00px;font-weight:normal;color:#000;letter-spacing:0.00px;">$</div>
<div class="t s" style="right:691.80px;top:510.11px;font-size:17.00px;font-weight:normal;color:#000;letter-spacing:0.20px;margin-right:-0.20px;">1.00</div>
<div class="t s" style="right:534.60px;top:510.11px;font-size:17.00px;font-weight:normal;color:#000;letter-spacing:0.20px;margin-right:-0.20px;">50</div>
<div class="t s" style="left:624.50px;top:510.11px;font-size:17.00px;font-weight:normal;color:#000;letter-spacing:0.00px;">$</div>
<div class="t s" style="right:405.30px;top:510.11px;font-size:17.00px;font-weight:normal;color:#000;letter-spacing:0.20px;margin-right:-0.20px;">50.00</div>
<div class="t s" style="left:753.50px;top:510.11px;font-size:17.00px;font-weight:normal;color:#000;letter-spacing:0.00px;">$</div>
<div class="t s" style="right:301.80px;top:510.11px;font-size:17.00px;font-weight:normal;color:#000;letter-spacing:0.20px;margin-right:-0.20px;">50.00</div>
<div class="t s" style="left:857.00px;top:510.11px;font-size:17.00px;font-weight:normal;color:#000;letter-spacing:0.00px;">$</div>
<div class="t s" style="left:990.30px;width:0;top:510.11px;font-size:17.00px;font-weight:normal;color:#000;letter-spacing:0.00px;display:flex;justify-content:center;"><span>-</span></div>
<div class="t s" style="left:34.90px;top:709.23px;font-size:17.00px;font-weight:normal;color:#000;letter-spacing:0.00px;">Party Package Base</div>
<div class="t s" style="left:339.80px;top:709.23px;font-size:17.00px;font-weight:normal;color:#000;letter-spacing:0.00px;">$</div>
<div class="t s" style="right:691.80px;top:709.23px;font-size:17.00px;font-weight:normal;color:#000;letter-spacing:0.20px;margin-right:-0.20px;">500.00</div>
<div class="t s" style="right:534.60px;top:709.23px;font-size:17.00px;font-weight:normal;color:#000;letter-spacing:0.20px;margin-right:-0.20px;">1</div>
<div class="t s" style="left:624.50px;top:709.23px;font-size:17.00px;font-weight:normal;color:#000;letter-spacing:0.00px;">$</div>
<div class="t s" style="right:405.30px;top:709.23px;font-size:17.00px;font-weight:normal;color:#000;letter-spacing:0.20px;margin-right:-0.20px;">500.00</div>
<div class="t s" style="left:753.50px;top:709.23px;font-size:17.00px;font-weight:normal;color:#000;letter-spacing:0.00px;">$</div>
<div class="t s" style="left:816.50px;width:0;top:709.23px;font-size:17.00px;font-weight:normal;color:#000;letter-spacing:0.00px;display:flex;justify-content:center;"><span>-</span></div>
<div class="t s" style="left:857.00px;top:709.23px;font-size:17.00px;font-weight:normal;color:#000;letter-spacing:0.00px;">$</div>
<div class="t s" style="right:121.70px;top:709.23px;font-size:17.00px;font-weight:normal;color:#000;letter-spacing:0.20px;margin-right:-0.20px;">(500.00)</div>
<div class="t s" style="left:34.90px;top:731.36px;font-size:17.00px;font-weight:normal;color:#000;letter-spacing:0.00px;">Extra Guest Fee (Child)</div>
<div class="t s" style="left:339.80px;top:731.36px;font-size:17.00px;font-weight:normal;color:#000;letter-spacing:0.00px;">$</div>
<div class="t s" style="right:691.80px;top:731.36px;font-size:17.00px;font-weight:normal;color:#000;letter-spacing:0.20px;margin-right:-0.20px;">9.99</div>
<div class="t s" style="right:534.60px;top:731.36px;font-size:17.00px;font-weight:normal;color:#000;letter-spacing:0.20px;margin-right:-0.20px;">5</div>
<div class="t s" style="left:624.50px;top:731.36px;font-size:17.00px;font-weight:normal;color:#000;letter-spacing:0.00px;">$</div>
<div class="t s" style="right:405.30px;top:731.36px;font-size:17.00px;font-weight:normal;color:#000;letter-spacing:0.20px;margin-right:-0.20px;">49.95</div>
<div class="t s" style="left:753.50px;top:731.36px;font-size:17.00px;font-weight:normal;color:#000;letter-spacing:0.00px;">$</div>
<div class="t s" style="left:816.50px;width:0;top:731.36px;font-size:17.00px;font-weight:normal;color:#000;letter-spacing:0.00px;display:flex;justify-content:center;"><span>-</span></div>
<div class="t s" style="left:857.00px;top:731.36px;font-size:17.00px;font-weight:normal;color:#000;letter-spacing:0.00px;">$</div>
<div class="t s" style="right:121.70px;top:731.36px;font-size:17.00px;font-weight:normal;color:#000;letter-spacing:0.20px;margin-right:-0.20px;">(49.95)</div>
<div class="t s" style="left:34.90px;top:753.48px;font-size:17.00px;font-weight:normal;color:#000;letter-spacing:0.00px;">Extra Guest Fee (Adult)</div>
<div class="t s" style="left:339.80px;top:753.48px;font-size:17.00px;font-weight:normal;color:#000;letter-spacing:0.00px;">$</div>
<div class="t s" style="right:691.80px;top:753.48px;font-size:17.00px;font-weight:normal;color:#000;letter-spacing:0.20px;margin-right:-0.20px;">12.99</div>
<div class="t s" style="right:534.60px;top:753.48px;font-size:17.00px;font-weight:normal;color:#000;letter-spacing:0.20px;margin-right:-0.20px;">5</div>
<div class="t s" style="left:624.50px;top:753.48px;font-size:17.00px;font-weight:normal;color:#000;letter-spacing:0.00px;">$</div>
<div class="t s" style="right:405.30px;top:753.48px;font-size:17.00px;font-weight:normal;color:#000;letter-spacing:0.20px;margin-right:-0.20px;">64.95</div>
<div class="t s" style="left:753.50px;top:753.48px;font-size:17.00px;font-weight:normal;color:#000;letter-spacing:0.00px;">$</div>
<div class="t s" style="left:816.50px;width:0;top:753.48px;font-size:17.00px;font-weight:normal;color:#000;letter-spacing:0.00px;display:flex;justify-content:center;"><span>-</span></div>
<div class="t s" style="left:857.00px;top:753.48px;font-size:17.00px;font-weight:normal;color:#000;letter-spacing:0.00px;">$</div>
<div class="t s" style="right:121.70px;top:753.48px;font-size:17.00px;font-weight:normal;color:#000;letter-spacing:0.20px;margin-right:-0.20px;">(64.95)</div>
<div class="t sb" style="left:34.70px;top:576.91px;font-size:16.50px;font-weight:bold;color:#000;letter-spacing:0.00px;">Total Facility Rental</div>
<div class="abs" style="left:615.00px;top:572.00px;width:406.30px;height:1.50px;background:#111"></div>
<div class="t sb" style="left:624.50px;top:576.91px;font-size:16.50px;font-weight:bold;color:#000;letter-spacing:0.00px;">$</div>
<div class="t sb" style="right:405.30px;top:576.91px;font-size:16.50px;font-weight:bold;color:#000;letter-spacing:0.45px;margin-right:-0.45px;">750.00</div>
<div class="t sb" style="left:753.50px;top:576.91px;font-size:16.50px;font-weight:bold;color:#000;letter-spacing:0.00px;">$</div>
<div class="t sb" style="right:301.80px;top:576.91px;font-size:16.50px;font-weight:bold;color:#000;letter-spacing:0.45px;margin-right:-0.45px;">250.00</div>
<div class="t sb" style="left:857.00px;top:576.91px;font-size:16.50px;font-weight:bold;color:#000;letter-spacing:0.00px;">$</div>
<div class="t sb" style="right:121.70px;top:576.91px;font-size:16.50px;font-weight:bold;color:#000;letter-spacing:0.45px;margin-right:-0.45px;">(500.00)</div>
<div class="t sb" style="left:34.70px;top:798.16px;font-size:16.50px;font-weight:bold;color:#000;letter-spacing:0.00px;">Total Party Package</div>
<div class="abs" style="left:615.00px;top:793.25px;width:406.30px;height:1.50px;background:#111"></div>
<div class="t sb" style="left:624.50px;top:798.16px;font-size:16.50px;font-weight:bold;color:#000;letter-spacing:0.00px;">$</div>
<div class="t sb" style="right:405.30px;top:798.16px;font-size:16.50px;font-weight:bold;color:#000;letter-spacing:0.45px;margin-right:-0.45px;">614.90</div>
<div class="t sb" style="left:753.50px;top:798.16px;font-size:16.50px;font-weight:bold;color:#000;letter-spacing:0.00px;">$</div>
<div class="t sb" style="left:816.50px;width:0;top:798.16px;font-size:16.50px;font-weight:bold;color:#000;letter-spacing:0.00px;display:flex;justify-content:center;"><span>-</span></div>
<div class="t sb" style="left:857.00px;top:798.16px;font-size:16.50px;font-weight:bold;color:#000;letter-spacing:0.00px;">$</div>
<div class="t sb" style="right:121.70px;top:798.16px;font-size:16.50px;font-weight:bold;color:#000;letter-spacing:0.45px;margin-right:-0.45px;">(614.90)</div>
<div class="t sb" style="left:34.70px;top:864.53px;font-size:16.50px;font-weight:bold;color:#000;letter-spacing:0.00px;">Food &amp; Drinks:</div>
<div class="t s" style="left:34.90px;top:888.81px;font-size:17.00px;font-weight:normal;color:#000;letter-spacing:0.00px;">Catering Food Package per Person</div>
<div class="t s" style="left:34.90px;top:911.11px;font-size:17.00px;font-weight:normal;color:#000;letter-spacing:0.00px;">(example - buffet is $9.99 per person)</div>
<div class="t s" style="left:34.90px;top:937.31px;font-size:17.00px;font-weight:normal;color:#000;letter-spacing:0.00px;">Catering Drink Package per Person</div>
<div class="t s" style="left:34.90px;top:959.61px;font-size:17.00px;font-weight:normal;color:#000;letter-spacing:0.00px;">(example - bar rental is $5.99 per</div>
<div class="t s" style="left:34.90px;top:981.91px;font-size:17.00px;font-weight:normal;color:#000;letter-spacing:0.00px;">person)</div>
<div class="t s" style="left:34.90px;top:1004.01px;font-size:17.00px;font-weight:normal;color:#000;letter-spacing:0.00px;">Cake</div>
<div class="t s" style="left:34.90px;top:1026.21px;font-size:17.00px;font-weight:normal;color:#000;letter-spacing:0.00px;">Fill in Food or Drink Name (e.g. Pizza)</div>
<div class="t s" style="left:34.90px;top:1048.31px;font-size:17.00px;font-weight:normal;color:#000;letter-spacing:0.00px;">Fill in Food or Drink Name</div>
<div class="t s" style="left:339.80px;top:911.11px;font-size:17.00px;font-weight:normal;color:#000;letter-spacing:0.00px;">$</div>
<div class="t s" style="right:691.80px;top:911.11px;font-size:17.00px;font-weight:normal;color:#000;letter-spacing:0.20px;margin-right:-0.20px;">9.99</div>
<div class="t s" style="right:534.60px;top:911.11px;font-size:17.00px;font-weight:normal;color:#000;letter-spacing:0.20px;margin-right:-0.20px;">20</div>
<div class="t s" style="left:624.50px;top:911.11px;font-size:17.00px;font-weight:normal;color:#000;letter-spacing:0.00px;">$</div>
<div class="t s" style="right:405.30px;top:911.11px;font-size:17.00px;font-weight:normal;color:#000;letter-spacing:0.20px;margin-right:-0.20px;">199.80</div>
<div class="t s" style="left:753.50px;top:911.11px;font-size:17.00px;font-weight:normal;color:#000;letter-spacing:0.00px;">$</div>
<div class="t s" style="left:816.50px;width:0;top:911.11px;font-size:17.00px;font-weight:normal;color:#000;letter-spacing:0.00px;display:flex;justify-content:center;"><span>-</span></div>
<div class="t s" style="left:857.00px;top:911.11px;font-size:17.00px;font-weight:normal;color:#000;letter-spacing:0.00px;">$</div>
<div class="t s" style="right:121.70px;top:911.11px;font-size:17.00px;font-weight:normal;color:#000;letter-spacing:0.20px;margin-right:-0.20px;">(199.80)</div>
<div class="t s" style="left:339.80px;top:981.91px;font-size:17.00px;font-weight:normal;color:#000;letter-spacing:0.00px;">$</div>
<div class="t s" style="right:691.80px;top:981.91px;font-size:17.00px;font-weight:normal;color:#000;letter-spacing:0.20px;margin-right:-0.20px;">5.99</div>
<div class="t s" style="right:534.60px;top:981.91px;font-size:17.00px;font-weight:normal;color:#000;letter-spacing:0.20px;margin-right:-0.20px;">20</div>
<div class="t s" style="left:624.50px;top:981.91px;font-size:17.00px;font-weight:normal;color:#000;letter-spacing:0.00px;">$</div>
<div class="t s" style="right:405.30px;top:981.91px;font-size:17.00px;font-weight:normal;color:#000;letter-spacing:0.20px;margin-right:-0.20px;">119.80</div>
<div class="t s" style="left:753.50px;top:981.91px;font-size:17.00px;font-weight:normal;color:#000;letter-spacing:0.00px;">$</div>
<div class="t s" style="left:816.50px;width:0;top:981.91px;font-size:17.00px;font-weight:normal;color:#000;letter-spacing:0.00px;display:flex;justify-content:center;"><span>-</span></div>
<div class="t s" style="left:857.00px;top:981.91px;font-size:17.00px;font-weight:normal;color:#000;letter-spacing:0.00px;">$</div>
<div class="t s" style="right:121.70px;top:981.91px;font-size:17.00px;font-weight:normal;color:#000;letter-spacing:0.20px;margin-right:-0.20px;">(119.80)</div>
<div class="t s" style="left:339.80px;top:1004.01px;font-size:17.00px;font-weight:normal;color:#000;letter-spacing:0.00px;">$</div>
<div class="t s" style="right:691.80px;top:1004.01px;font-size:17.00px;font-weight:normal;color:#000;letter-spacing:0.20px;margin-right:-0.20px;">60.00</div>
<div class="t s" style="right:534.60px;top:1004.01px;font-size:17.00px;font-weight:normal;color:#000;letter-spacing:0.20px;margin-right:-0.20px;">1</div>
<div class="t s" style="left:624.50px;top:1004.01px;font-size:17.00px;font-weight:normal;color:#000;letter-spacing:0.00px;">$</div>
<div class="t s" style="right:405.30px;top:1004.01px;font-size:17.00px;font-weight:normal;color:#000;letter-spacing:0.20px;margin-right:-0.20px;">60.00</div>
<div class="t s" style="left:753.50px;top:1004.01px;font-size:17.00px;font-weight:normal;color:#000;letter-spacing:0.00px;">$</div>
<div class="t s" style="right:301.80px;top:1004.01px;font-size:17.00px;font-weight:normal;color:#000;letter-spacing:0.20px;margin-right:-0.20px;">75.00</div>
<div class="t s" style="left:857.00px;top:1004.01px;font-size:17.00px;font-weight:normal;color:#000;letter-spacing:0.00px;">$</div>
<div class="t s" style="right:128.00px;top:1004.01px;font-size:17.00px;font-weight:normal;color:#000;letter-spacing:0.20px;margin-right:-0.20px;">15.00</div>
<div class="t s" style="left:339.80px;top:1026.21px;font-size:17.00px;font-weight:normal;color:#000;letter-spacing:0.00px;">$</div>
<div class="t s" style="left:426.50px;width:0;top:1026.21px;font-size:17.00px;font-weight:normal;color:#000;letter-spacing:0.00px;display:flex;justify-content:center;"><span>-</span></div>
<div class="t s" style="right:534.60px;top:1026.21px;font-size:17.00px;font-weight:normal;color:#000;letter-spacing:0.20px;margin-right:-0.20px;">1</div>
<div class="t s" style="left:624.50px;top:1026.21px;font-size:17.00px;font-weight:normal;color:#000;letter-spacing:0.00px;">$</div>
<div class="t s" style="left:713.00px;width:0;top:1026.21px;font-size:17.00px;font-weight:normal;color:#000;letter-spacing:0.00px;display:flex;justify-content:center;"><span>-</span></div>
<div class="t s" style="left:753.50px;top:1026.21px;font-size:17.00px;font-weight:normal;color:#000;letter-spacing:0.00px;">$</div>
<div class="t s" style="left:816.50px;width:0;top:1026.21px;font-size:17.00px;font-weight:normal;color:#000;letter-spacing:0.00px;display:flex;justify-content:center;"><span>-</span></div>
<div class="t s" style="left:857.00px;top:1026.21px;font-size:17.00px;font-weight:normal;color:#000;letter-spacing:0.00px;">$</div>
<div class="t s" style="left:990.30px;width:0;top:1026.21px;font-size:17.00px;font-weight:normal;color:#000;letter-spacing:0.00px;display:flex;justify-content:center;"><span>-</span></div>
<div class="t s" style="left:339.80px;top:1048.31px;font-size:17.00px;font-weight:normal;color:#000;letter-spacing:0.00px;">$</div>
<div class="t s" style="left:426.50px;width:0;top:1048.31px;font-size:17.00px;font-weight:normal;color:#000;letter-spacing:0.00px;display:flex;justify-content:center;"><span>-</span></div>
<div class="t s" style="right:534.60px;top:1048.31px;font-size:17.00px;font-weight:normal;color:#000;letter-spacing:0.20px;margin-right:-0.20px;">1</div>
<div class="t s" style="left:624.50px;top:1048.31px;font-size:17.00px;font-weight:normal;color:#000;letter-spacing:0.00px;">$</div>
<div class="t s" style="left:713.00px;width:0;top:1048.31px;font-size:17.00px;font-weight:normal;color:#000;letter-spacing:0.00px;display:flex;justify-content:center;"><span>-</span></div>
<div class="t s" style="left:753.50px;top:1048.31px;font-size:17.00px;font-weight:normal;color:#000;letter-spacing:0.00px;">$</div>
<div class="t s" style="left:816.50px;width:0;top:1048.31px;font-size:17.00px;font-weight:normal;color:#000;letter-spacing:0.00px;display:flex;justify-content:center;"><span>-</span></div>
<div class="t s" style="left:857.00px;top:1048.31px;font-size:17.00px;font-weight:normal;color:#000;letter-spacing:0.00px;">$</div>
<div class="t s" style="left:990.30px;width:0;top:1048.31px;font-size:17.00px;font-weight:normal;color:#000;letter-spacing:0.00px;display:flex;justify-content:center;"><span>-</span></div>
<div class="abs" style="left:2px;top:1060.5px;width:1138px;height:36px;background:#ececec;border-top:1px solid #d2d2d2"></div>
<div class="abs" style="left:2px;top:1096px;width:1138px;height:1.5px;background:#b9b9b9"></div>
<div class="abs" style="left:2px;top:1097.5px;width:1138px;height:7px;background:#e4e4e4"></div>
<div class="abs" style="left:85.3px;top:1059px;width:181.7px;height:32.4px;background:#fdfdfd;border-radius:0 0 4px 4px;box-shadow:0 1px 2px rgba(0,0,0,.25)"></div>
<div class="t" style="left:109.40px;top:1070.33px;font-size:16.50px;font-weight:bold;color:#2a7d4f;letter-spacing:0.20px;">Budgeted Spend</div>
<div class="t" style="left:292.80px;top:1070.33px;font-size:16.50px;font-weight:normal;color:#606060;letter-spacing:0.55px;">Actual Spend</div>
<div class="t" style="left:443.60px;top:1070.33px;font-size:16.50px;font-weight:normal;color:#606060;letter-spacing:0.55px;">Invitation List</div>
<div class="t" style="left:595.20px;top:1070.33px;font-size:16.50px;font-weight:normal;color:#606060;letter-spacing:0.55px;">Guest List</div>
<div class="abs" style="left:420.4px;top:1062px;width:1px;height:28px;background:#d0d0d0"></div>
<div class="abs" style="left:572.6px;top:1062px;width:1px;height:28px;background:#d0d0d0"></div>
<div class="abs" style="left:696.5px;top:1062px;width:1px;height:28px;background:#d0d0d0"></div>
<div class="abs" style="left:749.0px;top:1062px;width:1px;height:28px;background:#d0d0d0"></div>
<svg class="abs" style="left:0;top:1060" width="760" height="40"><path d="M31.2,11.6 V26 L21.4,18.8 Z" fill="#bdbdbd"/><path d="M53,11.6 V26 L62.8,18.8 Z" fill="#bdbdbd"/><path d="M724,10.9 V25 M717.1,17.6 H731" stroke="#5a5a5a" stroke-width="2.8"/></svg>
</div></body></html>
